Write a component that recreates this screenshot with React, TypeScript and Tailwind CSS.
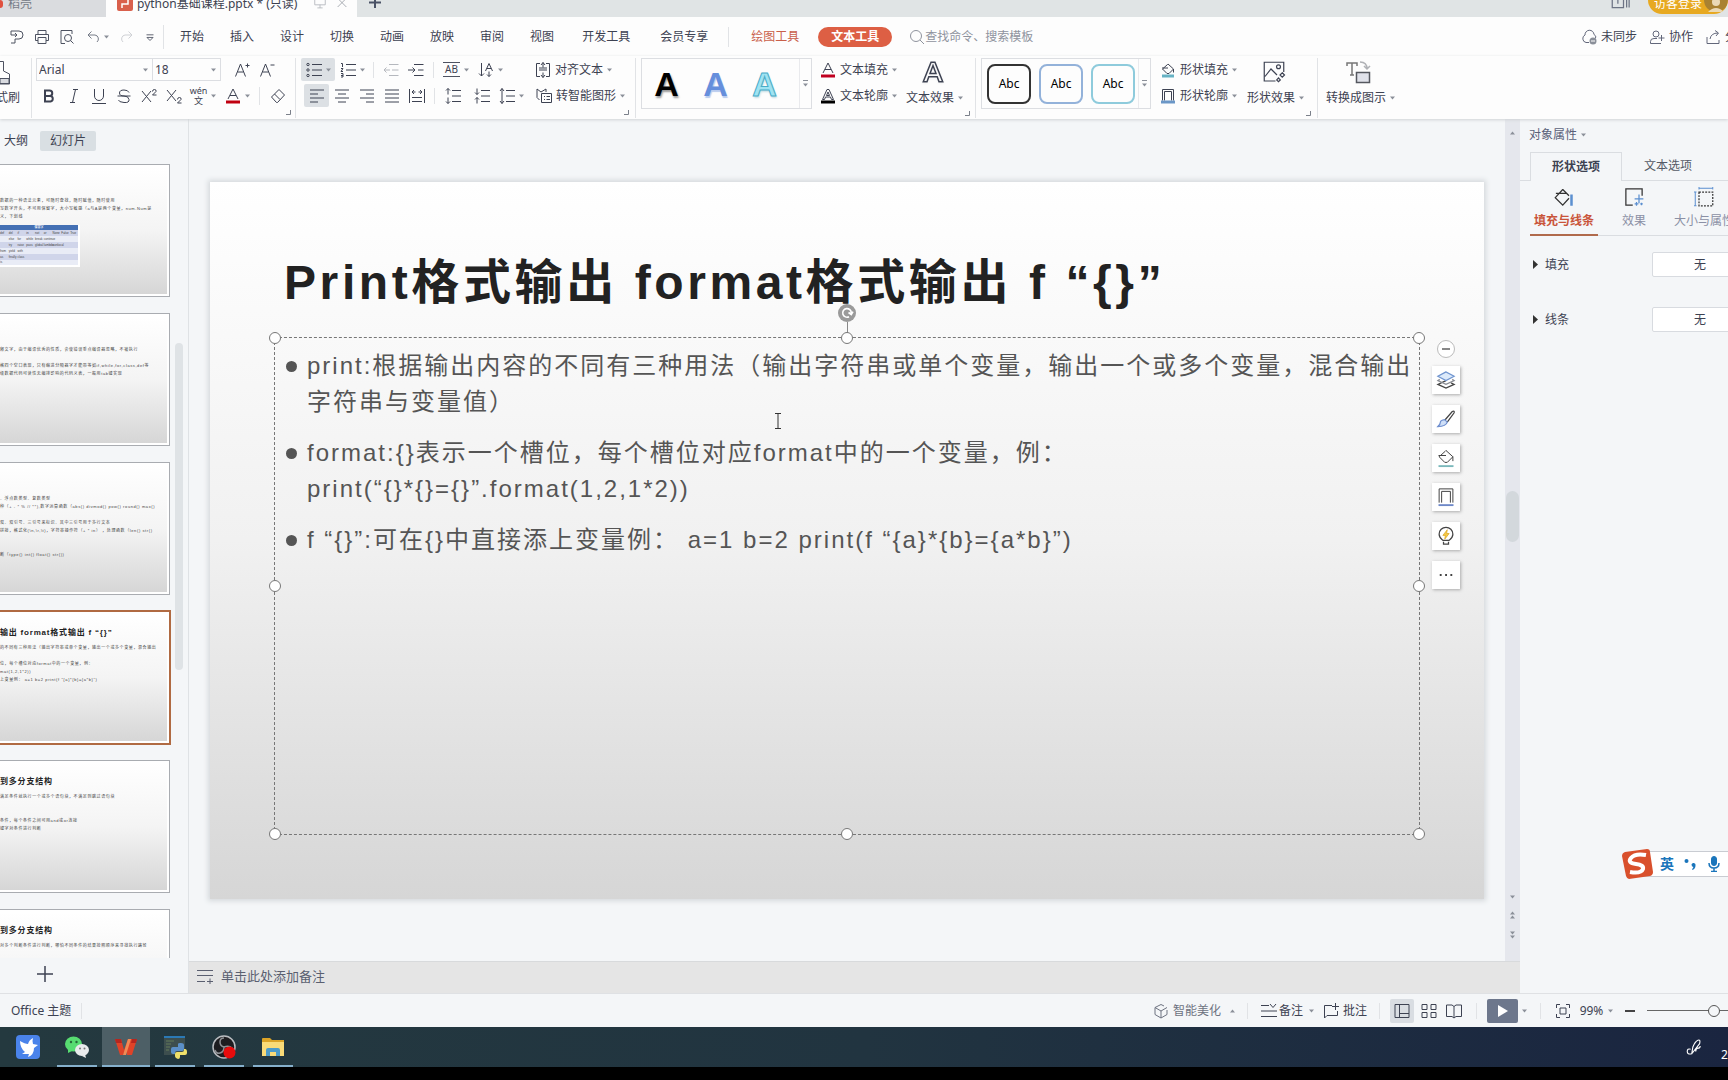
import type { ReactNode } from "react";

interface IconProps {
	d?: string;
	size?: number;
	className?: string;
	children?: ReactNode;
}

// Line icon on a 16px grid
function Icon({ d, size = 16, className = "", children }: IconProps) {
	return (
		<svg
			width={size}
			height={size}
			viewBox="0 0 16 16"
			fill="none"
			stroke="currentColor"
			className={`shrink-0 ${className}`}
			aria-hidden="true"
		>
			{d && <path d={d} />}
			{children}
		</svg>
	);
}

function Caret({ up = false }: { up?: boolean }) {
	return (
		<svg width="5" height="4" viewBox="0 0 5 4" className="shrink-0 fill-[#8b9099]" aria-hidden="true">
			<path d={up ? "M0 3.5h5L2.5 0.5z" : "M0 0.5h5L2.5 3.5z"} />
		</svg>
	);
}

function Corner() {
	return (
		<svg width="5" height="5" viewBox="0 0 5 5" fill="none" stroke="#7b808a" className="shrink-0 self-end" aria-hidden="true">
			<path d="M4.5 0v4.5H0" />
		</svg>
	);
}

function Tool({ label, active = false, children }: { label: string; active?: boolean; children: ReactNode }) {
	return (
		<button
			type="button"
			aria-label={label}
			className={`flex h-[23px] w-[25px] shrink-0 items-center justify-center rounded-xs ${active ? "bg-[#dce0e4]" : ""}`}
		>
			{children}
		</button>
	);
}

function DropTool({ label, active = false, children }: { label: string; active?: boolean; children: ReactNode }) {
	return (
		<button
			type="button"
			aria-label={label}
			className={`flex h-[23px] w-[34px] shrink-0 items-center justify-center gap-1 rounded-xs ${active ? "bg-[#dce0e4]" : ""}`}
		>
			{children}
			<Caret />
		</button>
	);
}

function TextTool({ icon, children }: { icon: ReactNode; children: ReactNode }) {
	return (
		<button type="button" className="flex h-[23px] shrink-0 items-center gap-1 whitespace-nowrap">
			{icon}
			{children}
			<Caret />
		</button>
	);
}

function BigTool({ icon, children }: { icon: ReactNode; children: ReactNode }) {
	return (
		<button type="button" className="flex shrink-0 flex-col items-center gap-1 whitespace-nowrap">
			<span className="flex h-7 items-center pr-1">{icon}</span>
			<span className="flex items-center gap-1">
				{children}
				<Caret />
			</span>
		</button>
	);
}

function Divider({ className = "h-4" }: { className?: string }) {
	return <span className={`w-px shrink-0 bg-[#e1e3e6] ${className}`} />;
}

const bucket = "M7.5 2.5 2.5 7l4.5 4.5h2L13.5 7 8 2zM2 6h6M13.5 7v3.5";
const outline = "M2.5 12.5v-11h11v11M4.5 12.5v-9h7v9";

function LetterIcon({ color, hollow = false }: { color: string; hollow?: boolean }) {
	return (
		<Icon>
			{hollow ? (
				<path d="M2.5 11.5 7 1.5h2l4.5 10h-2l-1-2.5h-5l-1 2.5zM6.5 7.500h3L8 4z" />
			) : (
				<path d="M3 11 8 1l5 10M5 7.5h6" />
			)}
			<path d="M1 14h14" stroke={color} strokeWidth="3" />
		</Icon>
	);
}

const menus = ["开始", "插入", "设计", "切换", "动画", "放映", "审阅", "视图"];

function TitleBar() {
	return (
		<div className="flex h-[17px] shrink-0 items-start overflow-hidden bg-[#e0e4e5]">
			<div className="flex h-full w-[106px] items-start bg-[#dadcdf]">
				<span className="h-2 w-[3px] rounded-r-full bg-[#e0503e]" />
				<span className="pl-[5px] leading-[8px] text-[#777c88]">稻壳</span>
			</div>
			<div className="flex h-full w-[251px] items-start bg-[#fdfdfd] pl-[11px]">
				<svg width="16" height="11" viewBox="0 0 16 11" className="shrink-0" aria-hidden="true">
					<path d="M0 0h16v9a2 2 0 0 1-2 2H2a2 2 0 0 1-2-2z" fill="#d9604c" />
					<path d="M5 8V4h6V0" fill="none" stroke="#fff" strokeWidth="1.5" />
				</svg>
				<span className="w-[180px] pl-1 whitespace-nowrap leading-[8px] text-[#3c4150]">python基础课程.pptx * (只读)</span>
				<Icon size={14} className="text-[#b5b8be]" d="M2 0v5.5h12V0M8 5.5V9M5 9h6" />
				<button type="button" aria-label="关闭标签" className="ml-2">
					<Icon size={14} className="text-[#9ea2a9]" d="M3 -2l10 10M13 -2 3 8" />
				</button>
			</div>
			<button type="button" aria-label="新建标签" className="ml-2.5">
				<Icon size={16} className="text-[#4a5266]">
					<path d="M2 2.5h12M8 -3v11" strokeWidth="2" />
				</Icon>
			</button>
			<div className="ml-auto flex items-start gap-2">
				<Icon size={20} className="text-[#6d7485]" d="M1 -4v10h9V-4M5.5 0v3M12.5 -2v8M14.5 -2v8" />
				<Divider className="h-3" />
				<button type="button" className="flex h-[14px] w-20 items-start justify-between overflow-hidden rounded-b-full bg-[#e7a921] pl-1.5 leading-[8px] text-white">
					<span>访客登录</span>
					<svg width="24" height="14" viewBox="0 0 24 14" aria-hidden="true">
						<circle cx="12" cy="0" r="12" fill="#a98231" />
						<circle cx="12" cy="2" r="4" fill="#ead9b5" />
						<path d="M4 12q8-8 16 0z" fill="#ead9b5" />
					</svg>
				</button>
			</div>
		</div>
	);
}

function MenuBar() {
	return (
		<div className="flex h-[39px] shrink-0 items-center bg-[#fdfdfd]">
			<div className="flex items-center gap-[9px] pl-[9px] text-[#4d5261]">
				<button type="button" aria-label="输出为PDF">
					<Icon d="M2 6V2h8a3.5 3.5 0 0 1 0 8H6v4H2M2 6h6M6 4l2 2-2 2" />
				</button>
				<button type="button" aria-label="打印">
					<Icon>
						<path d="M4 5V1.5h8V5M4 11.5H1.5v-6h13v6H12" />
						<path d="M4 8.5h8v6H4z" />
					</Icon>
				</button>
				<button type="button" aria-label="打印预览">
					<Icon>
						<path d="M6 14.5H2v-13h11V5" />
						<circle cx="9" cy="9" r="3.5" />
						<path d="m11.5 11.5 3 3" />
					</Icon>
				</button>
				<button type="button" aria-label="撤销" className="flex items-center gap-0.5 pl-0.5 text-[#777c88]">
					<Icon d="M5.5 2.5 2 6l3.500 3.500M2 6h7a4 4 0 0 1 2 7" />
					<Caret />
				</button>
				<button type="button" aria-label="恢复" className="text-[#cfd1d5]">
					<Icon d="M10.5 2.5 14 6l-3.5 3.5M14 6H7a4 4 0 0 0-2 7" />
				</button>
				<button type="button" aria-label="自定义快速访问">
					<Icon size={14} d="M4 5.5h8M4.5 8.5h7L8 12z" />
				</button>
			</div>
			<Divider className="ml-1.5 h-6" />
			<nav className="flex items-center gap-[26px] pl-4 whitespace-nowrap">
				{menus.map((m) => (
					<button key={m} type="button">
						{m}
					</button>
				))}
				<button type="button" className="pl-0.5">开发工具</button>
				<button type="button" className="pl-1">会员专享</button>
			</nav>
			<Divider className="ml-5 h-5" />
			<button type="button" className="pl-[22px] text-[#c9604a]">绘图工具</button>
			<button type="button" className="ml-[19px] h-5 w-[74px] rounded-full bg-[#dd5f44] font-bold text-white">文本工具</button>
			<label className="ml-[17px] flex items-center text-[#8f939d]">
				<Icon>
					<circle cx="7" cy="7" r="5.5" />
					<path d="m11 11 4 4" />
				</Icon>
				<input type="text" aria-label="查找命令" placeholder="查找命令、搜索模板" className="w-36 bg-transparent outline-none placeholder:text-[#8f939d]" />
			</label>
			<div className="ml-auto flex w-[147px] items-center gap-1 overflow-hidden whitespace-nowrap">
				<Icon className="text-[#62677a]">
					<path d="M8 13.5H5a4 4 0 0 1-1-7.5 4.5 4.5 0 0 1 9-.5 3 3 0 0 1 1.5 4" />
					<circle cx="12" cy="12" r="3.5" fill="#8a8f99" stroke="none" />
					<path d="M10 12h4" stroke="#fff" />
				</Icon>
				<button type="button">未同步</button>
				<Icon className="ml-2 text-[#62677a]">
					<circle cx="7" cy="5" r="3" />
					<path d="M1.5 14.5v-2q0-3 3.5-3h3M1.5 14.500H12M12.5 6v6M9.5 9h6" />
				</Icon>
				<button type="button">协作</button>
				<Icon className="ml-2 text-[#62677a]" d="M2 8v6.5h12V11M5 10q1-6 8-6M10 1.5 13.5 4 11 7" />
				<button type="button">分享</button>
			</div>
		</div>
	);
}

function Ribbon() {
	return (
		<div className="z-10 flex h-[63px] shrink-0 bg-[#fdfdfd] pt-0.5 shadow-[0_1px_3px_#cfd2d6]">
			<button type="button" className="flex w-[31px] shrink-0 flex-col items-start gap-1 overflow-hidden">
				<svg width="12" height="28" viewBox="0 0 12 28" fill="none" stroke="#4d5261" aria-hidden="true">
					<path d="M0 3.5h3.5V13l6 3v10H0" />
					<path d="M0 20.5h9v5H0z" fill="#d9dbe0" />
				</svg>
				<span className="-ml-1">式刷</span>
			</button>
			<Divider className="h-[60px]" />

			<div className="flex w-[259px] shrink-0 flex-col gap-[3px] pl-1">
				<div className="flex">
					<label className="flex h-[23px] w-[117px] items-center border border-[#dcdee2] pr-1">
						<select aria-label="字体" className="flex-1 appearance-none bg-transparent pl-0.5 outline-none">
							<option>Arial</option>
						</select>
						<Caret />
					</label>
					<label className="-ml-px flex h-[23px] w-[69px] items-center border border-[#dcdee2] pr-1">
						<select aria-label="字号" className="flex-1 appearance-none bg-transparent pl-0.5 outline-none">
							<option>18</option>
						</select>
						<Caret />
					</label>
					<div className="ml-2 flex">
						<Tool label="增大字号">
							<Icon d="M1.5 14.5 6.500 2l5 12.5M3.500 10h6M11.5 3.5h4M13.5 1.5v4" />
						</Tool>
						<Tool label="减小字号">
							<Icon d="M1.5 14.5 6.500 2l5 12.5M3.500 10h6M11.5 3h4" />
						</Tool>
					</div>
				</div>
				<div className="flex items-center">
					<Tool label="加粗">
						<Icon>
							<path d="M4 2.5h4.5a2.7 2.7 0 0 1 0 5.5H4zM4 8h5.5a2.8 2.8 0 0 1 0 5.5H4z" strokeWidth="2" />
						</Icon>
					</Tool>
					<Tool label="倾斜">
						<Icon d="M7 1.5h5M4 14.5h5M9.5 1.5l-3 13" />
					</Tool>
					<Tool label="下划线">
						<Icon d="M3.5 1v7a4.5 4.5 0 0 0 9 0V1M1 15.5h14" />
					</Tool>
					<Tool label="删除线">
						<Icon d="M13 4.5Q12 2 8 2 3.5 2 3.5 5t4.5 3 5 3.5-5 3-5.5-2.5M1.5 8h13" />
					</Tool>
					<Tool label="上标">
						<Icon d="M1 3l9 11M10 3 1 14M11.5 3.5q0-2 2-2t1.5 2l-3.5 3.500H15.5" />
					</Tool>
					<Tool label="下标">
						<Icon d="M1 2l9 11M10 2 1 13M11.5 11.500q0-2 2-2t1.5 2l-3.5 3.500H15.5" />
					</Tool>
					<DropTool label="拼音指南">
						<span className="flex flex-col items-center text-[9px] leading-[10px]">
							<span className="h-2.5">wén</span>
							<span className="h-2.5">文</span>
						</span>
					</DropTool>
					<DropTool label="字体颜色">
						<LetterIcon color="#c00010" />
					</DropTool>
					<Divider className="mx-[5px] h-[18px]" />
					<Tool label="清除格式">
						<Icon>
							<path d="M1.5 9 9 1.5 14.5 7 7.5 14.5h-1z" />
							<path d="M4.5 6 10 11.5" />
						</Icon>
					</Tool>
				</div>
				<div className="flex justify-end">
					<Corner />
				</div>
			</div>
			<Divider className="ml-1 h-[60px]" />

			<div className="flex w-[339px] shrink-0 flex-col gap-[3px] pl-[5px]">
				<div className="flex items-center">
					<DropTool label="项目符号" active>
						<Icon>
							<path d="M6 2.5h10M6 8h10M6 13.5h10" />
							<circle cx="2" cy="2.5" r="1.2" />
							<circle cx="2" cy="8" r="1.2" />
							<circle cx="2" cy="13.5" r="1.2" />
						</Icon>
					</DropTool>
					<DropTool label="编号">
						<Icon d="M6 2.5h10M6 8h10M6 13.5h10M1 1.5h1.5V5M1 6.5h2L1 9.5h2M1 11.5h2v3.5H1M1 13.5h2" />
					</DropTool>
					<Divider className="mr-1 ml-1 h-4" />
					<div className="flex text-[#b5b8be]">
						<Tool label="减少缩进">
							<Icon d="M6 2.5h9.5M9 8h6.5M6 13.5h9.5M1 8h6M3.5 5.5 1 8l2.5 2.5" />
						</Tool>
					</div>
					<Tool label="增加缩进">
						<Icon d="M6 2.5h9.5M10 8h5.5M6 13.5h9.5M0 8h7M4.5 5.5 7 8l-2.5 2.5" />
					</Tool>
					<Divider className="mx-[5px] h-4" />
					<DropTool label="文字方向">
						<span className="border-y border-[#4d5261] px-0.5 text-[10px] leading-[13px]">AB</span>
					</DropTool>
					<DropTool label="排序">
						<Icon d="M3.5 1v13M1 11.5 3.500 14 6 11.5M7.5 9 11 1.5 14.500 9M9 6.5h4M11 9.5v5M9 12.5l2 2 2-2" />
					</DropTool>
					<div className="ml-7 flex">
						<TextTool icon={<Icon d="M5 1.5H1.5v13H5M11 1.5h3.5v13H11M4 8h8M8 .5v5M6 3l2-2.5L10 3M8 10.5v5M6 13l2 2.5 2-2.5M4 6h8" />}>对齐文本</TextTool>
					</div>
				</div>
				<div className="flex items-center pl-[3px]">
					<Tool label="左对齐" active>
						<Icon d="M1 2h14M1 6h8M1 10h14M1 14h8" />
					</Tool>
					<Tool label="居中">
						<Icon d="M1 2h14M4 6h8M1 10h14M4 14h8" />
					</Tool>
					<Tool label="右对齐">
						<Icon d="M1 2h14M7 6h8M1 10h14M7 14h8" />
					</Tool>
					<Tool label="两端对齐">
						<Icon d="M1 2h14M1 6h14M1 10h14M1 14h14" />
					</Tool>
					<Tool label="分散对齐">
						<Icon d="M.5 1v14M15.5 1v14M3 4h3.5M9.5 4H13M5 2 3 4l2 2M11 2l2 2-2 2M3 9.5h10M3 13.5h10" />
					</Tool>
					<Divider className="mx-[5px] h-4" />
					<Tool label="增大段落行距">
						<Icon d="M7 2.5h9M7 8h9M7 13.5h9M3 .5v6M1 2.5l2-2 2 2M3 9.5v6M1 13.5l2 2 2-2" />
					</Tool>
					<span className="w-1" />
					<Tool label="减小段落行距">
						<Icon d="M7 2.5h9M7 8h9M7 13.5h9M3 .5v6M1 4.5l2 2 2-2M3 9.5v6M1 11.5l2-2 2 2" />
					</Tool>
					<DropTool label="行距">
						<Icon d="M7 2.5h9M7 8h9M7 13.5h9M3 .5v15M1 3l2-2.500L5 3M1 13l2 2.5L5 13" />
					</DropTool>
					<div className="ml-2 flex">
						<TextTool
							icon={
								<Icon>
									<path d="M5.5 5.5h10v9h-10zM8 8.5h1M10.5 8.5h3.5M8 11.5h1M10.5 11.5h3.5" />
									<path d="M3.5 12 1 9.500V1l4 3 5-3v3" />
								</Icon>
							}
						>
							转智能图形
						</TextTool>
					</div>
				</div>
				<div className="flex justify-end pr-1.5">
					<Corner />
				</div>
			</div>
			<Divider className="h-[60px]" />

			<div className="mx-[5px] flex h-[51px] w-[171px] shrink-0 border border-[#dcdee2] font-['Liberation_Sans',sans-serif] text-[34px] leading-[48px] font-bold">
				<button type="button" className="w-[49px] text-black [text-shadow:1px_2px_2px_#999]">A</button>
				<button type="button" className="w-[49px] text-[#668fdc] [text-shadow:1px_2px_1px_#b9cbee]">A</button>
				<button type="button" className="w-[49px] text-[#9fe3f2] [-webkit-text-stroke:1px_#48acc8] [text-shadow:1px_2px_2px_#c5dde4]">A</button>
				<button type="button" aria-label="更多文本样式" className="ml-auto flex w-3 flex-col items-center justify-center gap-0.5 border-l border-[#e9eaed]">
					<span className="h-px w-[5px] bg-[#8b9099]" />
					<Caret />
				</button>
			</div>

			<div className="ml-[3px] flex shrink-0 flex-col gap-[3px]">
				<TextTool icon={<LetterIcon color="#c00020" />}>文本填充</TextTool>
				<TextTool icon={<LetterIcon color="#000" hollow />}>文本轮廓</TextTool>
			</div>
			<div className="ml-[9px] flex shrink-0">
				<BigTool icon={<Icon size={24} className="drop-shadow-xs" d="M1.5 14.5 6.7 1.5h2.6l5.2 13h-2.5l-1.2-3.3H5.2L4 14.5zM6 9h4L8 3.7z" />}>文本效果</BigTool>
				<div className="flex flex-col justify-end pb-[3px] pl-0.5">
					<Corner />
				</div>
			</div>
			<Divider className="mx-[5px] h-[60px]" />

			<div className="flex h-[51px] w-[170px] shrink-0 items-center border border-[#dcdee2] pl-[5px]">
				<div className="flex flex-1 gap-2">
					<button type="button" className="h-10 w-11 rounded-lg border-2 border-[#333] text-black">Abc</button>
					<button type="button" className="h-10 w-11 rounded-lg border-2 border-[#93b2da] text-black">Abc</button>
					<button type="button" className="h-10 w-11 rounded-lg border-2 border-[#8ecbdc] text-black">Abc</button>
				</div>
				<button type="button" aria-label="更多形状样式" className="flex h-full w-3 flex-col items-center justify-center gap-0.5 border-l border-[#e9eaed]">
					<span className="h-px w-[5px] bg-[#8b9099]" />
					<Caret />
				</button>
			</div>

			<div className="ml-[9px] flex shrink-0 flex-col gap-[3px]">
				<TextTool
					icon={
						<Icon>
							<path d={bucket} />
							<path d="M2 14h12" stroke="#67b2c4" strokeWidth="3" />
						</Icon>
					}
				>
					形状填充
				</TextTool>
				<TextTool
					icon={
						<Icon>
							<path d={outline} />
							<path d="M1 14h14" stroke="#6b97c7" strokeWidth="3" />
						</Icon>
					}
				>
					形状轮廓
				</TextTool>
			</div>
			<div className="ml-2.5 flex shrink-0">
				<BigTool
					icon={
						<Icon size={24}>
							<path d="M9 14H1.5V1.5H14.5V8M2 11l4-5 4 4" strokeWidth=".8" />
							<circle cx="11" cy="4.5" r="1.3" strokeWidth=".8" />
							<path d="M13.5 8.5 15 10l-1.5 1.5L12 10zM11 12l1.2 1.3-1.2 1.2-1.2-1.2z" strokeWidth=".8" />
						</Icon>
					}
				>
					形状效果
				</BigTool>
				<div className="flex flex-col justify-end pb-[3px] pl-0.5">
					<Corner />
				</div>
			</div>
			<Divider className="mx-1.5 h-[60px]" />
			<div className="ml-0.5 flex shrink-0">
				<BigTool
					icon={
						<svg width="25" height="24" viewBox="0 0 25 24" fill="none" aria-hidden="true">
							<path d="M1 6V3h10v3M6 3v12M4 15h4" stroke="#777" strokeWidth="1.5" />
							<path d="M14 2q7 0 7 7M18 6l3 3 3-3" stroke="#b0b2b6" strokeWidth="1.5" />
							<path d="M10.5 12.5h13v10h-13z" fill="#e0e2ea" stroke="#55585f" strokeWidth="1.5" />
						</svg>
					}
				>
					转换成图示
				</BigTool>
			</div>
		</div>
	);
}

interface Thumb {
	title?: string;
	lines: string[];
	table?: boolean;
	selected?: boolean;
}

const thumbs: Thumb[] = [
	{
		lines: ["数据的一种语法元素，可随时查找，随时赋值，随时使用", "写数字开头，不可用保留字，大小写敏感（a与A是两个变量，num.Num是", "义，下划线"],
		table: true,
	},
	{
		lines: ["释文字，由于编译优秀的性质，会使错误重点编译器忽略，不被执行", "", "格四个空口表现，只有缩进分隔器字才能带等如if,while,for,class,def等", "级数据代码可读性无编排影响的代码义表，一般用tab键实现"],
	},
	{
		lines: ["、浮点数类型、复数类型", "种（+ - * % // **),数字运算函数（abs()  divmod() pow() round() max()", "", "双、双引号、三引号来标识、其中三引号用于多行文本", "拼接，格式化(\\n,\\r,\\t)，字符串操作符（+ * in） ，处理函数（len() str()", "", "", "断（type() int() float() str())"],
	},
	{
		title: "输出 format格式输出 f “{}”",
		lines: ["的不同有三种用法（输出字符串或单个变量，输出一个或多个变量，混合输出", "", "位，每个槽位对应format中的一个变量，例：", "mat(1,2,1*2))", "上变量例： a=1 b=2 print(f “{a}*{b}={a*b}”)"],
		selected: true,
	},
	{
		title: "到多分支结构",
		lines: ["满足条件就执行一个或多个语句块，不满足则跳过语句块", "", "", "条件，每个条件之间可用and或or连接", "键字对条件进行判断"],
	},
	{
		title: "到多分支结构",
		lines: ["对多个判断条件进行判断，哪怕不同条件的结果按照顺序来寻找执行路径"],
	},
];

const keywords = [
	["def", "del", "if", "in", "not", "or", "None", "False", "True"],
	["", "else", "for", "while", "break", "continue", "", "", ""],
	["", "try", "raise", "pass", "global", "lambda", "nonlocal", "", ""],
	["from", "yield", "with", "", "", "", "", "", ""],
	["as", "finally", "class", "", "", "", "", "", ""],
	["is", "", "", "", "", "", "", "", ""],
];

function SlideThumb({ title, lines, table, selected }: Thumb) {
	return (
		<button
			type="button"
			className={`-ml-1 flex h-[133px] w-[174px] shrink-0 items-stretch border border-[#a9acb1] bg-white p-0.5 text-left ${selected ? "outline-2 -outline-offset-1 outline-[#b06a42]" : ""}`}
		>
			<span className="flex w-full flex-col bg-linear-to-b from-white via-[#f4f4f4] to-[#d6d6d6] pl-px font-['Liberation_Sans','Noto_Sans_CJK_SC',sans-serif] text-[#444]">
				<span className="block h-[30px] pt-3 text-[8px] leading-[14px] font-bold tracking-widest whitespace-nowrap text-[#222]">{title}</span>
				<span className="block text-[4px] leading-[8px] tracking-[0.15em] whitespace-nowrap">
					{lines.map((l, i) => (
						<span key={i} className="block h-2">
							{l}
						</span>
					))}
				</span>
				{table && (
					<table className="mt-1 w-20 table-fixed border-r-2 border-b-2 border-white text-[3px] leading-[5px]">
						<thead>
							<tr className="bg-[#4470b4] text-center text-white">
								<th colSpan={9}>保留字</th>
							</tr>
						</thead>
						<tbody>
							{keywords.map((row, i) => (
								<tr key={i} className="h-[6px] odd:bg-[#d0d5ea] even:bg-[#e9ecf6]">
									{row.map((w, j) => (
										<td key={j}>{w}</td>
									))}
								</tr>
							))}
						</tbody>
					</table>
				)}
			</span>
		</button>
	);
}

function Outline() {
	return (
		<aside className="flex w-[189px] shrink-0 flex-col border-r border-[#dfe2e5] bg-[#f4f6f8]">
			<div className="flex h-[45px] shrink-0 items-center gap-3 pb-px pl-1">
				<button type="button">大纲</button>
				<button type="button" className="h-5 w-14 rounded-xs bg-[#d9dfe3]">幻灯片</button>
			</div>
			<div className="flex min-h-0 flex-1">
				<div className="flex flex-1 flex-col gap-4 overflow-hidden">
					{thumbs.map((t, i) => (
						<SlideThumb key={i} {...t} />
					))}
				</div>
				<div className="w-[13px] shrink-0 pt-[179px]">
					<div className="h-[327px] w-2 rounded-full bg-[#dfe3e6]" />
				</div>
			</div>
			<div className="flex h-[35px] shrink-0 items-center pb-1 pl-[37px]">
				<button type="button" aria-label="新建幻灯片">
					<Icon>
						<path d="M0 8h16M8 0v16" strokeWidth="1.5" />
					</Icon>
				</button>
			</div>
		</aside>
	);
}

function Bullet({ children }: { children: ReactNode }) {
	return (
		<li className="flex gap-2.5">
			<span className="mt-[13px] size-[11px] shrink-0 rounded-full bg-[#555]" />
			<span>{children}</span>
		</li>
	);
}

const handles = [
	"left-0 top-0",
	"left-1/2 top-0",
	"left-full top-0",
	"left-0 top-1/2",
	"left-full top-1/2",
	"left-0 top-full",
	"left-1/2 top-full",
	"left-full top-full",
];

const floating = [
	{
		label: "图层",
		icon: (
			<Icon size={20}>
				<path d="M8 8.5 1.5 11.5 8 14.5l6.5-3L12 10.3" />
				<path d="m3 7.5-1.5 1L8 11.5l6.5-3-1.5-1" stroke="#8a8d94" />
				<path d="M8 1.5 1.5 5 8 8.5 14.5 5z" fill="#dceafa" stroke="#6f94cf" />
			</Icon>
		),
	},
	{
		label: "样式",
		icon: (
			<Icon size={20}>
				<path d="M7 9 13 2q2-1 1.5 1L9 10.5" />
				<path d="M7 8.5 9 10.5Q8 14 1.5 14 3.5 12 3.5 10.5T7 8.5" fill="#cfdff7" stroke="#6f8fcf" />
			</Icon>
		),
	},
	{
		label: "填充",
		icon: (
			<Icon size={20}>
				<path d={bucket} strokeWidth=".8" />
				<path d="M2 14.5h12" stroke="#7ab8bb" strokeWidth="1.5" />
			</Icon>
		),
	},
	{
		label: "轮廓",
		icon: (
			<Icon size={20}>
				<path d={outline} strokeWidth=".8" />
				<path d="M2 14.5h12" stroke="#6e88c8" strokeWidth="1.5" />
			</Icon>
		),
	},
	{
		label: "智能",
		icon: (
			<Icon size={20}>
				<path d="M5.5 11.5Q2.5 9 2.5 6.5a5.5 5.5 0 0 1 11 0q0 2.5-3 5zM6 12.5v2h4v-2" />
				<path d="M9 3 5.5 7.5h2L7 10.500 10.5 6h-2z" fill="#f6c945" stroke="#d9a520" strokeWidth=".6" />
			</Icon>
		),
	},
	{
		label: "更多",
		icon: (
			<Icon size={20}>
				<path d="M3 8h1.5M7.3 8h1.5M11.5 8H13" strokeWidth="1.5" />
			</Icon>
		),
	},
];

function Slide() {
	return (
		<div className="relative flex aspect-video w-full flex-col bg-linear-to-b from-white via-[#f1f1f1] to-[#d6d6d6] px-16 pb-16 font-['Liberation_Sans','Noto_Sans_CJK_SC',sans-serif] shadow-[0_0_5px_2px_#d5d9dc]">
			<h1 className="flex h-[155px] shrink-0 items-end pb-6 pl-2.5 text-[48px] leading-[60px] font-bold tracking-[0.075em] whitespace-nowrap text-[#222]">
				Print格式输出 format格式输出 f “{"{}"}”
			</h1>
			<div className="relative flex-1 border border-dashed border-[#777]">
				<ul className="flex flex-col gap-[15px] pt-[10px] pl-[11px] text-[24px] leading-[36px] tracking-[2px] text-[#555]">
					<Bullet>print:根据输出内容的不同有三种用法（输出字符串或单个变量，输出一个或多个变量，混合输出字符串与变量值）</Bullet>
					<Bullet>
						format:{"{}"}表示一个槽位，每个槽位对应format中的一个变量，例：
						<br />
						print(“{"{}*{}={}"}”.format(1,2,1*2))
					</Bullet>
					<Bullet>
						f “{"{}"}”:可在{"{}"}中直接添上变量例： a=1 b=2 print(f “{"{a}*{b}={a*b}"}”)
					</Bullet>
				</ul>
				<span className="absolute -top-4 left-1/2 h-4 w-px bg-[#888]" />
				{handles.map((h) => (
					<span key={h} className={`absolute size-3 -translate-1/2 rounded-full border border-[#777] bg-white ${h}`} />
				))}
				<svg width="18" height="18" viewBox="0 0 18 18" fill="none" className="absolute -top-[34px] left-1/2 -translate-x-1/2" aria-hidden="true">
					<circle cx="9" cy="9" r="9" fill="#9a9a9a" />
					<path d="M11 12.7A4.3 4.3 0 1 1 13.3 9M10.5 8.5l2.8 2 1.7-2.8" stroke="#fff" strokeWidth="1.6" />
				</svg>
				<svg width="8" height="16" viewBox="0 0 8 16" fill="none" stroke="#333" className="absolute top-[75px] left-[499px]" aria-hidden="true">
					<path d="M1 .5h6M1 15.5h6M4 .5v15" />
				</svg>
			</div>
			<div className="absolute top-[158px] right-6 flex flex-col items-center gap-[11px]">
				<button type="button" aria-label="收起" className="-mb-[3px] flex size-[18px] items-center justify-center rounded-full border border-[#bbb] bg-white">
					<span className="h-0.5 w-2 bg-[#888]" />
				</button>
				{floating.map((f) => (
					<button key={f.label} type="button" aria-label={f.label} className="flex size-7 items-center justify-center bg-white text-[#444] shadow-[1px_1px_3px_#aaa]">
						{f.icon}
					</button>
				))}
			</div>
		</div>
	);
}

function Editor() {
	return (
		<main className="flex min-w-0 flex-1 flex-col">
			<div className="flex min-h-0 flex-1 bg-[#f4f6f8]">
				<div className="min-w-0 flex-1 overflow-hidden px-[21px] pt-[63px]">
					<Slide />
				</div>
				<div className="flex w-[15px] shrink-0 flex-col items-center bg-[#e5e7ed] pt-3 pb-[22px]">
					<Caret up />
					<div className="mt-[356px] mb-auto h-[51px] w-[13px] rounded-full bg-[#d3d8dc]" />
					<div className="flex flex-col items-center gap-3">
						<Caret />
						<div className="flex flex-col">
							<Caret up />
							<Caret up />
						</div>
						<div className="flex flex-col">
							<Caret />
							<Caret />
						</div>
					</div>
				</div>
			</div>
			<label className="flex h-8 shrink-0 items-center gap-2 border-t border-[#d8dadc] bg-[#e5e5e5] pb-1 pl-2 text-[13px] text-[#5a5f70]">
				<Icon d="M0 2.5h16M0 7.5h16M0 13.500h8M10 13.5h6M13 10.5v6" />
				<input type="text" aria-label="备注" placeholder="单击此处添加备注" className="flex-1 bg-transparent outline-none placeholder:text-[#5a5f70]" />
			</label>
		</main>
	);
}

function PropertyRow({ name }: { name: string }) {
	return (
		<div className="flex h-[25px] items-center">
			<button type="button" className="flex w-[119px] shrink-0 items-center gap-[7px]">
				<svg width="5" height="9" viewBox="0 0 5 9" className="fill-[#333]" aria-hidden="true">
					<path d="M0 0v9l5-4.5z" />
				</svg>
				{name}
			</button>
			<select aria-label={name} className="h-[25px] w-24 shrink-0 appearance-none rounded-xs border border-[#d8dbe0] bg-white pl-[41px] outline-none">
				<option>无</option>
			</select>
		</div>
	);
}

function Properties() {
	return (
		<aside className="relative flex w-52 shrink-0 flex-col overflow-hidden bg-[#f4f6f8] whitespace-nowrap">
			<button type="button" className="flex h-[33px] shrink-0 items-center gap-1 pb-0.5 pl-[9px] text-[#5a6178]">
				对象属性
				<Caret />
			</button>
			<div className="flex h-[29px] shrink-0">
				<span className="w-2.5 border-b border-[#dadde1]" />
				<button type="button" className="w-[92px] border border-b-0 border-[#dadde1] font-bold">形状选项</button>
				<button type="button" className="flex-1 border-b border-[#dadde1] pr-3.5 text-[#555a66]">文本选项</button>
			</div>
			<div className="flex h-[55px] shrink-0 pl-2.5 text-[#8b90a5]">
				<button type="button" className="flex w-[68px] shrink-0 flex-col items-center gap-1 border-b-2 border-[#b06a4c] pt-1.5 font-bold text-[#c9543a]">
					<Icon size={20} className="text-[#333]">
						<path d="M7 2 1 8.5l6 6 5-5.5M7 2l5 5M1.5 5H10" />
						<path d="M13.5 6.5h1v8h-1z" stroke="#5b8fd0" />
					</Icon>
					<span className="pt-0.5">填充与线条</span>
				</button>
				<button type="button" className="flex w-[72px] shrink-0 flex-col items-center gap-1 border-b border-[#dadde1] pt-1.5">
					<Icon size={20}>
						<path d="M7 14.5H1.5v-13h13V7" stroke="#333" />
						<path d="M12 6v7M8.5 9.5h7M10 12v3M8.5 13.5h3M14 12.5v2M13 13.500h2" stroke="#5b8fd0" />
					</Icon>
					<span className="pt-0.5">效果</span>
				</button>
				<button type="button" className="flex w-[68px] shrink-0 flex-col items-center gap-1 border-b border-[#dadde1] pt-1.5">
					<Icon size={20}>
						<path d="M4 4h11v11H4z" stroke="#333" strokeDasharray="1.5 1" />
						<path d="M4 1h11M4 0v2M15 0v2M1 4v11M0 4h2M0 15h2" stroke="#5b8fd0" strokeWidth=".8" />
					</Icon>
					<span className="pt-0.5">大小与属性</span>
				</button>
			</div>
			<div className="flex flex-col gap-[30px] pt-4 pl-[13px]">
				<PropertyRow name="填充" />
				<PropertyRow name="线条" />
			</div>
			{/* input method bar floats above the window */}
			<div className="absolute right-0 bottom-[116px] flex h-[26px] w-[88px] items-center border-y border-[#c9ccd2] bg-white text-[#1a75bb]">
				<svg width="34" height="32" viewBox="0 0 34 32" className="-ml-[19px] shrink-0" aria-hidden="true">
					<path d="M4 4 26 1q3 0 3 3l3 20q0 3-3 4L8 31q-2 0-3-3L1 8Q1 5 4 4z" fill="#d9502c" />
					<path d="M25 7Q14 5 10 10t5 6q8 1 7 5-2 5-13 3" fill="none" stroke="#fff" strokeWidth="4" />
				</svg>
				<span className="pl-[5px] text-[14px] font-bold">英</span>
				<svg width="12" height="14" viewBox="0 0 12 14" className="mx-2.5 shrink-0 fill-[#1a75bb]" aria-hidden="true">
					<circle cx="2.5" cy="4" r="2" />
					<path d="M7.5 7.5a2 2 0 1 1 4 1q0 3-3 4.5l-.5-1q1.5-1 1.3-2-1.8-.5-1.8-2.5" />
				</svg>
				<Icon className="text-[#1a75bb]">
					<rect x="5.5" y="0.5" width="5" height="9" rx="2.5" fill="currentColor" />
					<path d="M3 7q0 5 5 5t5-5M8 12v3M5 15.5h6" strokeWidth="1.5" />
				</Icon>
			</div>
		</aside>
	);
}

function StatusBar() {
	return (
		<footer className="flex h-[34px] shrink-0 items-center border-t border-[#dfe1e4] bg-[#f4f6f8] whitespace-nowrap">
			<span className="pr-2.5 pl-[11px]">Office 主题</span>
			<Divider />
			<div className="ml-auto flex items-center">
				<button type="button" className="flex items-center gap-1 text-[#6d7280]">
					<Icon d="M8 1.5 2 4.5v7L8 15l6-3.5V7M14 4.5 8 8 2 4.5M8 8v7M8 1.5l3 1.5" />
					<span className="w-[53px] text-left">智能美化</span>
					<Caret up />
				</button>
				<Divider className="mr-[13px] ml-3 h-4" />
				<button type="button" className="flex items-center gap-0.5">
					<Icon d="M0 2.5h8M0 8h16M0 13.5h16M9 1l3 3.5L15 1" />
					<span className="mr-1">备注</span>
					<Caret />
				</button>
				<button type="button" className="ml-[9px] flex items-center gap-1">
					<Icon d="M9 2.5H1.5V15L4 12.500h10.5V8M12.5 0v7M9 3.5h7" />
					批注
				</button>
				<Divider className="mr-2.5 ml-3 h-4" />
				<button type="button" aria-label="普通视图" className="flex h-6 w-6 items-center justify-center rounded-xs bg-[#d9dde2]">
					<Icon d="M1 1.5h14v13H1zM5.5 1.5v13M5.5 10.5H15" />
				</button>
				<button type="button" aria-label="幻灯片浏览" className="ml-[7px]">
					<Icon d="M1 1.5h5v5H1zM10 1.5h5v5h-5zM1 9.5h5v5H1zM10 9.5h5v5h-5z" />
				</button>
				<button type="button" aria-label="阅读视图" className="mx-[9px]">
					<Icon d="M8 3.5 6 2H.5v11.5H6L8 15l2-1.5h5.5V2H10zM8 3.5V15" />
				</button>
				<Divider className="mr-2.5 ml-[5px] h-4" />
				<button type="button" aria-label="放映" className="flex h-6 w-[31px] items-center justify-center rounded-xs bg-[#6d778c]">
					<svg width="10" height="12" viewBox="0 0 10 12" className="fill-white" aria-hidden="true">
						<path d="M0 0v12l10-6z" />
					</svg>
				</button>
				<span className="px-1">
					<Caret />
				</span>
				<Divider className="mr-3.5 ml-[9px] h-4" />
				<Icon d="M5 1.5H1.5V5M11 1.5h3.5V5M1.5 11v3.5H5M14.5 11v3.5H11M5 5h6v6H5z" />
				<button type="button" className="flex items-center gap-1 pl-2">
					<span className="w-[25px]">99%</span>
					<Caret />
				</button>
				<button type="button" aria-label="缩小" className="mr-3 ml-3 h-0.5 w-2.5 bg-[#444]" />
				<div className="flex w-[81px] overflow-hidden">
					<input
						type="range"
						aria-label="显示比例"
						defaultValue={50}
						className="h-4 w-[134px] shrink-0 appearance-none bg-[linear-gradient(#666,#666)] bg-size-[100%_1px] bg-center bg-no-repeat [&::-webkit-slider-thumb]:size-3 [&::-webkit-slider-thumb]:appearance-none [&::-webkit-slider-thumb]:rounded-full [&::-webkit-slider-thumb]:border [&::-webkit-slider-thumb]:border-[#555] [&::-webkit-slider-thumb]:bg-[#f4f6f8]"
					/>
				</div>
			</div>
		</footer>
	);
}

function TaskItem({ label, state, children }: { label: string; state?: "open" | "active"; children: ReactNode }) {
	return (
		<button
			type="button"
			aria-label={label}
			className={`flex h-10 w-12 shrink-0 flex-col items-center justify-between ${state === "active" ? "bg-[#4d5f66]" : ""}`}
		>
			<svg width="24" height="24" viewBox="0 0 24 24" fill="none" className="mt-2" aria-hidden="true">
				{children}
			</svg>
			{state && <span className={`h-0.5 bg-[#86b0cc] ${state === "active" ? "w-full" : "w-10"}`} />}
		</button>
	);
}

function Taskbar() {
	return (
		<div className="flex h-10 shrink-0 items-center gap-px bg-linear-to-r from-[#24393f] via-[#213440] to-[#1a2540] pl-1">
			<TaskItem label="飞书">
				<rect width="24" height="24" rx="4" fill="#4a83ea" />
				<path d="M4 6q5 3 8 3 1-4 5-6-1 3 0 6l5 1-4 3q0 7-6 9l1-3H6l3-2q-5-4-5-11z" fill="#fff" />
			</TaskItem>
			<TaskItem label="微信" state="open">
				<ellipse cx="8.5" cy="9" rx="8.5" ry="7.5" fill="#57dc71" />
				<path d="m3 14 0 4 4-2z" fill="#57dc71" />
				<circle cx="6" cy="7" r="1.2" fill="#276b3a" />
				<circle cx="11.5" cy="7" r="1.2" fill="#276b3a" />
				<ellipse cx="17" cy="15" rx="7" ry="6" fill="#e9ebec" />
				<path d="m20 19 1 4-4-2z" fill="#e9ebec" />
				<circle cx="15" cy="13.5" r="1" fill="#777" />
				<circle cx="19.5" cy="13.5" r="1" fill="#777" />
			</TaskItem>
			<TaskItem label="WPS" state="active">
				<path d="M1 4h6l3 11 4-11h9l-5 16h-5l-1-6-3 6H6z" fill="#df4328" />
				<path d="M14 4h3l-5 16H9z" fill="#f08a55" />
				<path d="M1 4h6l1 4H2zM18 4h5l-1 4h-5z" fill="#b5261f" />
			</TaskItem>
			<TaskItem label="Python" state="open">
				<path d="M1 1h21v19H1z" fill="#3d4e4e" />
				<path d="M1 1h21v2H1z" fill="#2b79b5" />
				<path d="M3 6h8M3 9h5M3 12h4M3 15h3" stroke="#647a58" />
				<path d="M8 17v-3q0-2 2-2h5V9q0-1 2-1h1q3 0 3 2v4q0 2-2 2h-5q-2 0-2 2v1h-2q-2 0-2-2z" fill="#5b8fc7" />
				<path d="M24 15v3q0 2-2 2h-5v2q0 2-2 2l-2-1q-1-1-1-2v-2q0-2 2-2h5q2 0 2-2v-1h1q2 0 2 3z" fill="#efe06a" />
			</TaskItem>
			<TaskItem label="OBS" state="open">
				<circle cx="12" cy="12" r="11" fill="#1d1d20" stroke="#b9bcc0" strokeWidth="1.5" />
				<path d="M12 12q-4-1-4-5t4-4M12 12q5-2 8 1t0 6M12 12q0 5-4 6t-5-3" stroke="#8d9094" strokeWidth="1.5" />
				<circle cx="17.5" cy="17.5" r="6" fill="#e80c0c" />
			</TaskItem>
			<TaskItem label="文件资源管理器" state="open">
				<path d="M1 4q0-1 1-1h7l2 2h12v16H1z" fill="#dca427" />
				<path d="M1 7h22v14H1z" fill="#fadb78" />
				<path d="M5 21v-6q0-2 2-2h10q2 0 2 2v6h-4v-4H9v4z" fill="#4d9bc9" />
			</TaskItem>
			<div className="ml-auto flex items-center gap-[18px] self-stretch text-white">
				<Icon size={18} d="M6 14 13 5q1-4-1.5-3T7 8L6 14q-4 1-4-2t3-2M9.5 12q0-3 2-3t2-2" />
				<span className="w-[7px] overflow-hidden pt-4 whitespace-nowrap">2022/5/14</span>
			</div>
		</div>
	);
}

export default function App() {
	return (
		<div className="flex h-screen flex-col overflow-hidden bg-black pb-[13px] font-['Noto_Sans','Noto_Sans_CJK_SC',sans-serif] text-[12px] leading-[16px] text-[#3d4252]">
			<TitleBar />
			<MenuBar />
			<Ribbon />
			<div className="flex min-h-0 flex-1">
				<Outline />
				<Editor />
				<Properties />
			</div>
			<StatusBar />
			<Taskbar />
		</div>
	);
}
